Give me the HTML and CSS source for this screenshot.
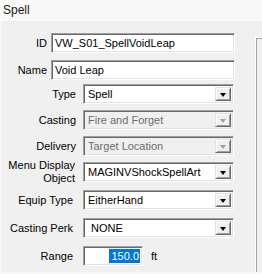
FILE: index.html
```html
<!DOCTYPE html>
<html lang="en">
<head>
  <meta charset="UTF-8" />
  <title>Spell</title>
  <link rel="stylesheet" href="styles.css">
</head>
<body>
  <div class="title">Spell</div>
  <div class="panel">
    <div class="form">
      <div class="row">
        <label class="lbl lbl-short">ID</label>
        <div class="edit wide">VW_S01_SpellVoidLeap</div>
      </div>
      <div class="row row-name">
        <label class="lbl lbl-short">Name</label>
        <div class="edit wide">Void Leap</div>
      </div>
      <div class="row row-type">
        <label class="lbl">Type</label>
        <div class="combo"><span class="val">Spell</span><span class="drop"><i></i></span></div>
      </div>
      <div class="row gap6">
        <label class="lbl">Casting</label>
        <div class="combo disabled"><span class="val">Fire and Forget</span><span class="drop"><i></i></span></div>
      </div>
      <div class="row gap6">
        <label class="lbl">Delivery</label>
        <div class="combo disabled"><span class="val">Target Location</span><span class="drop"><i></i></span></div>
      </div>
      <div class="row gap6">
        <label class="lbl lbl-menu">Menu Display<br>Object</label>
        <div class="combo"><span class="val">MAGINVShockSpellArt</span><span class="drop"><i></i></span></div>
      </div>
      <div class="row gap8">
        <label class="lbl lbl-low">Equip Type</label>
        <div class="combo"><span class="val">EitherHand</span><span class="drop"><i></i></span></div>
      </div>
      <div class="row gap8">
        <label class="lbl lbl-low">Casting Perk</label>
        <div class="combo"><span class="val val-pad">NONE</span><span class="drop"><i></i></span></div>
      </div>
      <div class="row gap8">
        <label class="lbl lbl-low">Range</label>
        <div class="edit range"><span class="sel">150.0</span></div>
        <span class="unit">ft</span>
      </div>
    </div>
    <div class="side-box"></div>
  </div>
</body>
</html>
```

FILE: styles.css
```css
* { box-sizing: border-box; }
body {
  margin: 0;
  background: #f9f9f9;
  font-family: 'Liberation Sans', Arial, sans-serif;
  font-size: 11px;
  color: #000;
  width: 262px;
  height: 274px;
  overflow: hidden;
}
.title {
  height: 21px;
  padding: 3px 0 0 3px;
  font-size: 12px;
  color: #1a1a1a;
}
.panel {
  margin-left: 1px;
  height: 251px;
  background: #f0f0f0;
  display: flex;
}
.form {
  width: 255px;
  padding-top: 12px;
}
.row {
  display: flex;
  align-items: center;
  height: 20px;
}
.row-name { margin-top: 7px; }
.row-type { margin-top: 4px; }
.gap6 { margin-top: 6px; }
.gap8 { margin-top: 8px; }
.lbl {
  width: 75px;
  margin-right: 7px;
  text-align: right;
  line-height: 13px;
}
.lbl-short {
  width: 46px;
  margin-right: 4px;
}
.lbl-menu { padding-right: 1px; }
.lbl-low { padding-right: 3px; }
.edit, .combo {
  height: 20px;
  background: #fff;
  border: 1px solid;
  border-color: #a0a0a0 #fff #fff #a0a0a0;
  box-shadow: inset 1px 1px 0 #696969, inset -1px -1px 0 #e3e3e3;
}
.edit {
  padding: 3px 3px 0 3px;
  white-space: nowrap;
  overflow: hidden;
}
.wide { width: 184px; }
.combo {
  width: 151px;
  padding: 2px;
  display: flex;
}
.val {
  flex: 1;
  padding: 1px 0 0 2px;
  white-space: nowrap;
  overflow: hidden;
}
.val-pad { padding-left: 5px; }
.drop {
  width: 16px;
  background: #f0f0f0;
  border: 1px solid;
  border-color: #e3e3e3 #696969 #696969 #e3e3e3;
  box-shadow: inset 1px 1px 0 #fff, inset -1px -1px 0 #a0a0a0;
  display: flex;
  align-items: center;
  justify-content: center;
}
.drop i {
  width: 1px;
  height: 0;
  border-top: 4px solid #000;
  border-left: 3px solid transparent;
  border-right: 3px solid transparent;
  margin-top: 1px;
}
.combo.disabled { background: #f0f0f0; }
.combo.disabled .val { color: #6d6d6d; }
.combo.disabled .drop i { border-top-color: #a0a0a0; }
.range {
  width: 60px;
  text-align: right;
  padding: 2px 2px 0 0;
}
.sel {
  background: #0078d7;
  color: #fff;
  display: inline-block;
  line-height: 14px;
  padding: 0 1px 0 2px;
}
.unit { margin-left: 8px; }
.side-box {
  flex: 1;
  margin-top: 17px;
  border-left: 1px solid #a0a0a0;
  border-top: 1px solid #a0a0a0;
  box-shadow: -1px -1px 0 #fff;
}
```
